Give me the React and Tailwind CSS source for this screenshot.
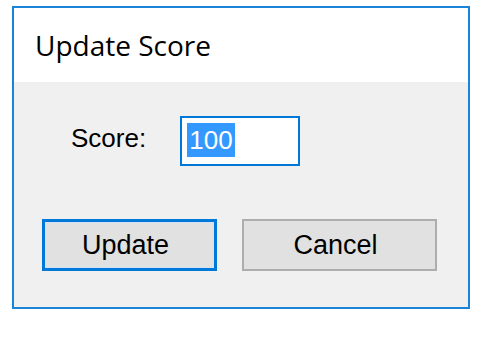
export default function App() {
  const sans = { fontFamily: '"Liberation Sans", Arial, sans-serif' };
  return (
    <div className="w-[496px] h-[341px] bg-white pt-[6px] pl-[12px]">
      <div className="w-[458px] h-[303px] border-2 border-[#1a84d8] flex flex-col">
        <div
          className="h-[74px] bg-white flex items-center pl-[21px] text-[28px] text-black"
          style={{ fontFamily: '"Open Sans", "Noto Sans", sans-serif' }}
        >
          Update Score
        </div>
        <div className="flex-1 bg-[#f0f0f0] flex flex-col pt-[34px]" style={sans}>
          <div className="flex items-center h-[50px]">
            <span className="ml-[57px] w-[109px] text-[26px] leading-none text-black -mt-[6px]">Score:</span>
            <div className="w-[120px] h-[50px] border-2 border-[#0078d7] bg-white pl-[5px] pt-[5px]">
              <span className="inline-flex items-center justify-center h-[34px] w-[48px] bg-[#3399ff] text-white text-[26px] leading-none">
                100
              </span>
            </div>
          </div>
          <div className="flex mt-[53px]">
            <button className="ml-[28px] w-[175px] h-[52px] border-[3px] border-[#0078d7] bg-[#e1e1e1] shadow-[inset_0_0_0_1px_#cfe3f5] text-[27px] leading-none text-black flex items-center justify-center pr-[8px]">
              Update
            </button>
            <button className="ml-[25px] w-[195px] h-[52px] border-2 border-[#adadad] bg-[#e1e1e1] text-[27px] leading-none text-black flex items-center justify-center pr-[8px]">
              Cancel
            </button>
          </div>
        </div>
      </div>
    </div>
  );
}
